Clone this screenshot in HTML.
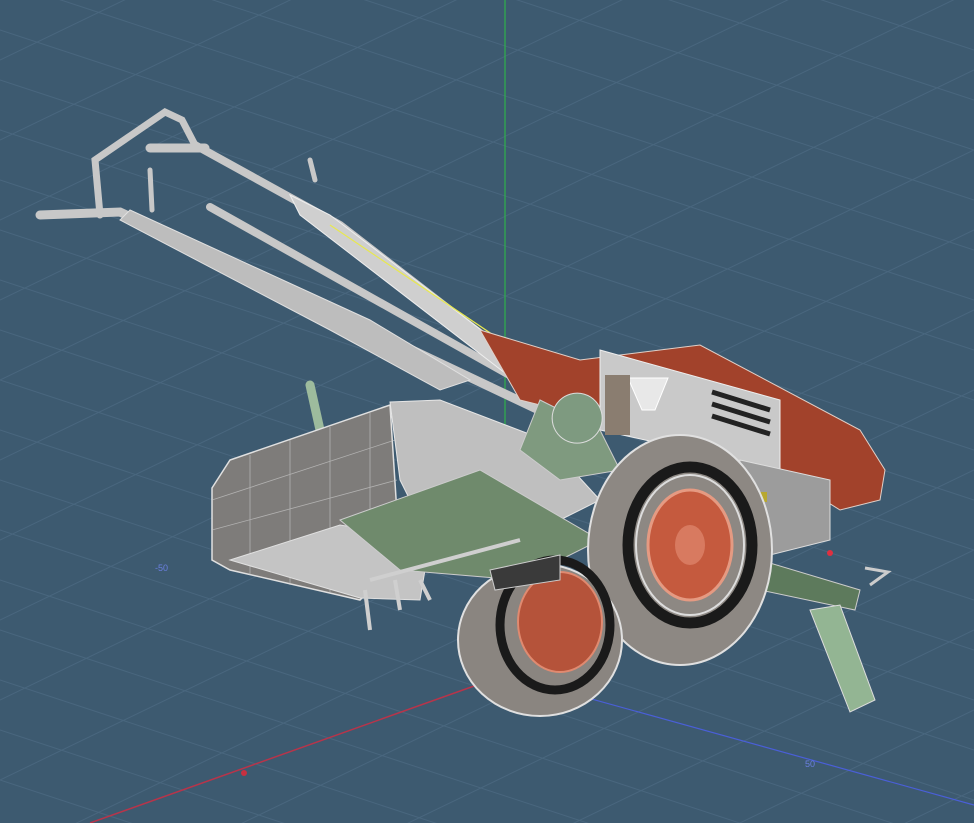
<!DOCTYPE html>
<html><head><meta charset="utf-8"><style>
html,body{margin:0;padding:0;background:#3d5a70;width:974px;height:823px;overflow:hidden}
#wrap{position:absolute;left:0;top:0;width:974px;height:823px;overflow:hidden}
svg{display:block;overflow:hidden;position:absolute;left:0;top:0}
text{font-family:"Liberation Sans",sans-serif}
</style></head><body><div id="wrap">
<svg width="974" height="823" viewBox="0 0 974 823" xmlns="http://www.w3.org/2000/svg">
<rect width="974" height="823" fill="#3d5a70"/>
<g stroke="#53718a" stroke-width="1" opacity="0.55">
<line x1="0" y1="-320" x2="974" y2="0"/><line x1="0" y1="-270" x2="974" y2="50"/><line x1="0" y1="-220" x2="974" y2="100"/><line x1="0" y1="-170" x2="974" y2="150"/><line x1="0" y1="-120" x2="974" y2="200"/><line x1="0" y1="-70" x2="974" y2="250"/><line x1="0" y1="-20" x2="974" y2="300"/><line x1="0" y1="30" x2="974" y2="350"/><line x1="0" y1="80" x2="974" y2="400"/><line x1="0" y1="130" x2="974" y2="450"/><line x1="0" y1="180" x2="974" y2="500"/><line x1="0" y1="230" x2="974" y2="550"/><line x1="0" y1="280" x2="974" y2="600"/><line x1="0" y1="330" x2="974" y2="650"/><line x1="0" y1="380" x2="974" y2="700"/><line x1="0" y1="430" x2="974" y2="750"/><line x1="0" y1="480" x2="974" y2="800"/><line x1="0" y1="530" x2="974" y2="850"/><line x1="0" y1="580" x2="974" y2="900"/><line x1="0" y1="630" x2="974" y2="950"/><line x1="0" y1="680" x2="974" y2="1000"/><line x1="0" y1="730" x2="974" y2="1050"/><line x1="0" y1="780" x2="974" y2="1100"/>
<line x1="0" y1="60" x2="974" y2="-410"/><line x1="0" y1="140" x2="974" y2="-330"/><line x1="0" y1="220" x2="974" y2="-250"/><line x1="0" y1="300" x2="974" y2="-170"/><line x1="0" y1="380" x2="974" y2="-90"/><line x1="0" y1="460" x2="974" y2="-10"/><line x1="0" y1="540" x2="974" y2="70"/><line x1="0" y1="620" x2="974" y2="150"/><line x1="0" y1="700" x2="974" y2="230"/><line x1="0" y1="780" x2="974" y2="310"/><line x1="0" y1="860" x2="974" y2="390"/><line x1="0" y1="940" x2="974" y2="470"/><line x1="0" y1="1020" x2="974" y2="550"/><line x1="0" y1="1100" x2="974" y2="630"/><line x1="0" y1="1180" x2="974" y2="710"/><line x1="0" y1="1260" x2="974" y2="790"/>
</g>
<line x1="505" y1="0" x2="505" y2="680" stroke="#2fb04a" stroke-width="1.2"/>
<line x1="90" y1="823" x2="505" y2="675" stroke="#b8344a" stroke-width="1.5"/>
<line x1="505" y1="675" x2="974" y2="805" stroke="#4a5fd8" stroke-width="1.2"/>
<text x="155" y="571" font-size="9" fill="#6a7fe0">-50</text>
<text x="805" y="767" font-size="9" fill="#6a7fe0">50</text>
<circle cx="244" cy="773" r="3" fill="#c83040"/>
<g fill="none" stroke="#c8c8c8" stroke-linecap="round">
<path d="M100 215 L95 160 L165 112 L182 120 L195 145" stroke-width="7"/>
<path d="M195 145 L340 225 L560 395" stroke-width="8"/>
<path d="M40 215 L120 212 L370 330 L560 420" stroke-width="9"/>
<path d="M150 148 L205 148" stroke-width="9"/>
<path d="M210 207 L545 395" stroke-width="8"/>
<path d="M310 160 L315 180" stroke-width="5"/>
<path d="M150 170 L152 210" stroke-width="5"/>
<path d="M310 385 L320 430" stroke-width="9" stroke="#9dbb9d"/>
</g>
<path d="M290 195 L330 215 L560 390 L540 400 L300 215Z" fill="#cfcfcf" stroke="#eee" stroke-width="1"/>
<path d="M330 225 L560 380" stroke="#e8e850" stroke-width="1.2"/>
<path d="M130 210 L370 320 L470 380 L440 390 L330 330 L120 220Z" fill="#bdbdbd" stroke="#e0e0e0"/>
<path d="M212 488 L230 460 L390 405 L400 560 L360 600 L230 570 L212 560Z" fill="#7e7c7a" stroke="#e0e0e0" stroke-width="1.5"/>
<g stroke="#c8c8c8" stroke-width="0.8" opacity="0.7"><line x1="250" y1="455" x2="250" y2="575"/><line x1="290" y1="440" x2="290" y2="585"/><line x1="330" y1="427" x2="330" y2="592"/><line x1="370" y1="413" x2="370" y2="598"/><line x1="212" y1="500" x2="395" y2="440"/><line x1="212" y1="530" x2="397" y2="480"/></g>
<path d="M390 402 L440 400 L545 440 L600 500 L560 520 L420 520 L400 480Z" fill="#bfbfbf" stroke="#e6e6e6"/>
<path d="M230 560 L360 598 L420 600 L430 540 L340 525Z" fill="#c4c4c4" stroke="#e0e0e0"/>
<path d="M340 520 L480 470 L600 540 L520 580 L400 570Z" fill="#6f8a6c" stroke="#ccc"/>
<path d="M480 330 L580 360 L700 345 L860 430 L885 470 L880 500 L840 510 L760 460 L600 420 L520 400Z" fill="#a2422b" stroke="#e0d0c8"/>
<path d="M600 350 L780 400 L780 470 L600 430Z" fill="#c9c9c9" stroke="#eee"/>
<g stroke="#222" stroke-width="5"><line x1="712" y1="392" x2="770" y2="410"/><line x1="712" y1="404" x2="770" y2="422"/><line x1="712" y1="416" x2="770" y2="434"/></g>
<path d="M628 378 L668 378 L655 410 L642 410Z" fill="#e8e8e8" stroke="#fff"/>
<rect x="605" y="375" width="25" height="60" fill="#8a7d70"/>
<path d="M740 460 L830 480 L830 540 L750 560 L735 520Z" fill="#9c9c9c" stroke="#ddd"/>
<rect x="757" y="492" width="10" height="10" fill="#b8a830"/>
<path d="M760 560 L860 590 L855 610 L760 590Z" fill="#5d7a5c" stroke="#ccc"/>
<path d="M810 610 L840 605 L875 700 L850 712Z" fill="#93b593" stroke="#ddd"/>
<path d="M540 400 L600 430 L620 470 L560 480 L520 450Z" fill="#7f9a7f" stroke="#ccc"/>
<path d="M560 400 A25 25 0 1 1 559 401Z" fill="#7e9a80" stroke="#ddd"/>
<ellipse cx="680" cy="550" rx="92" ry="115" fill="#8d8883" stroke="#e0e0e0" stroke-width="2"/>
<ellipse cx="690" cy="545" rx="62" ry="78" fill="none" stroke="#1a1a1a" stroke-width="11"/>
<ellipse cx="690" cy="545" rx="54" ry="70" fill="none" stroke="#ddd" stroke-width="2"/>
<ellipse cx="690" cy="545" rx="42" ry="55" fill="#c55a3e" stroke="#e59a82" stroke-width="3"/>
<ellipse cx="690" cy="545" rx="15" ry="20" fill="#d87a60"/>
<ellipse cx="540" cy="640" rx="82" ry="76" fill="#8a8580" stroke="#e0e0e0" stroke-width="2"/>
<ellipse cx="555" cy="625" rx="55" ry="65" fill="none" stroke="#1a1a1a" stroke-width="9"/>
<ellipse cx="560" cy="622" rx="42" ry="50" fill="#b5533a" stroke="#e08a70" stroke-width="2"/>
<path d="M490 570 L560 555 L560 580 L495 590Z" fill="#3a3a3a" stroke="#ccc"/>
<g fill="none" stroke="#cfcfcf" stroke-width="4">
<path d="M365 590 L370 630"/><path d="M395 580 L400 610"/><path d="M420 580 L430 600"/>
<path d="M370 580 L520 540"/>
</g>
<path d="M865 568 L888 572 L870 585" fill="none" stroke="#ccc" stroke-width="3"/>
<circle cx="830" cy="553" r="3" fill="#e03040"/>
</svg>
</div></body></html>
